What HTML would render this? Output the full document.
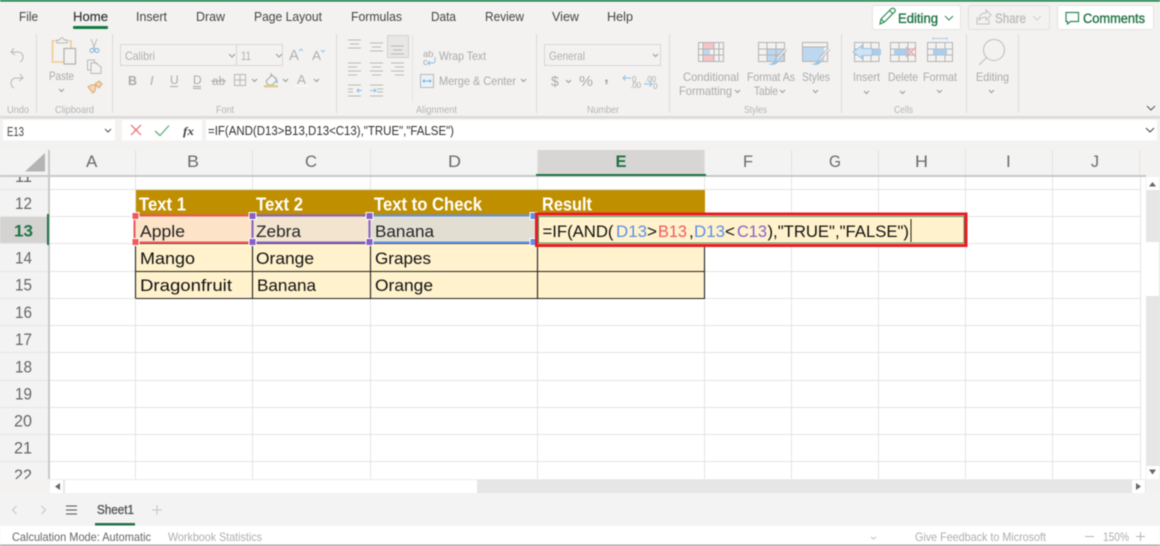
<!DOCTYPE html>
<html><head><meta charset="utf-8"><style>
html,body{margin:0;padding:0;background:#f3f2f1;overflow:hidden}
svg{display:block;filter:blur(.4px)}
text{font-family:"Liberation Sans",sans-serif;white-space:pre}
.tab{font-size:13px;fill:#444}
.g{font-size:10.5px;fill:#b4b4b4}
.r{font-size:12px;fill:#aaa}
.rn{font-size:17px;fill:#666}
.ch{font-size:17px;fill:#6a6a6a}
.c{font-size:17px;fill:#111}
.h{font-size:18px;font-weight:bold;fill:#fff}
.ic{fill:none;stroke:#b8b8b8;stroke-width:1}
.chev{fill:none;stroke:#999;stroke-width:1}
.btn{font-size:13.5px;stroke-width:.35}
</style></head><body>
<svg width="1160" height="546" viewBox="0 0 1160 546" xmlns="http://www.w3.org/2000/svg">
<rect width="1160" height="546" fill="#f3f2f1"/>
<rect width="1160" height="1.6" fill="#107c41"/>
<!-- tabs -->
<text class="tab" x="19" y="21" textLength="19" lengthAdjust="spacingAndGlyphs">File</text>
<text class="tab" x="73" y="21" textLength="35" lengthAdjust="spacingAndGlyphs" style="fill:#333;stroke:#333;stroke-width:.2">Home</text>
<text class="tab" x="136" y="21" textLength="31" lengthAdjust="spacingAndGlyphs">Insert</text>
<text class="tab" x="196" y="21" textLength="29" lengthAdjust="spacingAndGlyphs">Draw</text>
<text class="tab" x="254" y="21" textLength="68" lengthAdjust="spacingAndGlyphs">Page Layout</text>
<text class="tab" x="351" y="21" textLength="51" lengthAdjust="spacingAndGlyphs">Formulas</text>
<text class="tab" x="431" y="21" textLength="25" lengthAdjust="spacingAndGlyphs">Data</text>
<text class="tab" x="485" y="21" textLength="39" lengthAdjust="spacingAndGlyphs">Review</text>
<text class="tab" x="552" y="21" textLength="27" lengthAdjust="spacingAndGlyphs">View</text>
<text class="tab" x="607" y="21" textLength="26" lengthAdjust="spacingAndGlyphs">Help</text>
<rect x="73" y="26" width="35" height="3" rx="1" fill="#107c41"/>
<!-- top right buttons -->
<rect x="872.500" y="5.500" width="88" height="24" rx="2" fill="#fff" stroke="#e6e4e2"/>
<path d="M880 24l1-5 10-10c1-1 2.500-1 3.500 0s1 2 0 3l-10 10zM881 19l3.500 3.500M889.500 10.500l3.500 3.500" fill="none" stroke="#2e8b57" stroke-width="1.200"/>
<text class="btn" x="898" y="23" textLength="40" lengthAdjust="spacingAndGlyphs" style="fill:#217346;stroke:#217346">Editing</text>
<path d="M945 16l4 4 4-4" fill="none" stroke="#2e8b57" stroke-width="1"/>
<rect x="968.500" y="5.500" width="81" height="24" rx="2" fill="#f3f2f1" stroke="#e3e1df"/>
<path d="M977 17v7h12v-5M979 20c0-5 3-7 7-7v-3l5 5-5 5v-3c-3 0-5 1-7 3z" fill="none" stroke="#c2c2c2"/>
<text class="btn" x="995" y="23" textLength="31" lengthAdjust="spacingAndGlyphs" style="fill:#bdbdbd;stroke:#bdbdbd">Share</text>
<path d="M1033 16l4 4 4-4" fill="none" stroke="#d0d0d0"/>
<rect x="1057.500" y="5.500" width="96" height="24" rx="2" fill="#fff" stroke="#e6e4e2"/>
<path d="M1066 12.500h12.500v9h-8l-3 2.500v-2.500h-1.500z" fill="none" stroke="#2e8b57" stroke-width="1.200"/>
<text class="btn" x="1083" y="23" textLength="62" lengthAdjust="spacingAndGlyphs" style="fill:#217346;stroke:#217346">Comments</text>
<!-- ribbon separators -->
<path d="M36.500 34v79M112.500 34v79M336.500 34v79M536.500 34v79M669.500 34v79M841.500 34v79M966.500 34v79M1018.500 34v79" stroke="#dcdbd9"/>
<path d="M412.500 35v66" stroke="#e4e3e1"/>
<!-- undo redo -->
<path d="M14 48l-3 4 4 3M11 52h7c3 0 5 2 5 5 0 2-1 4-3 5" class="ic"/>
<path d="M20 74l3 4-4 3M23 78h-7c-3 0-5 2-5 5 0 2 1 4 3 5" class="ic"/>
<text class="g" x="7" y="113" textLength="22" lengthAdjust="spacingAndGlyphs">Undo</text>
<!-- clipboard -->
<path d="M57 41h-4.500v21h11.500M68 41h3v7" fill="none" stroke="#f2cf9f" stroke-width="1.800"/>
<path d="M57 43v-3h3c0-3 4-3 4 0h3v3z" fill="#f3f2f1" stroke="#b8b8b8"/>
<rect x="64" y="48.500" width="11.500" height="15.500" fill="#f3f2f1" stroke="#b0b0b0" stroke-width="1.200"/>
<text class="r" x="49" y="80" textLength="25" lengthAdjust="spacingAndGlyphs">Paste</text>
<path class="chev" d="M59 89l2.500 2.500 2.500-2.500"/>
<path d="M91 39l4 10M97 39l-4 10" class="ic"/>
<circle cx="92" cy="50.500" r="2" fill="none" stroke="#7fb3dd"/><circle cx="97" cy="50.500" r="2" fill="none" stroke="#7fb3dd"/>
<path d="M87.500 60h7l-.001 3h3M91 63l4-.5 6 4.500v6.500h-10zM87.500 60v10h3" class="ic"/>
<path d="M95 84l4-3 3 3-3 4zM96 85l-5 0-3 2 5 6 2-2z" fill="#f6d6ae" stroke="#d8a878"/>
<text class="g" x="55" y="113" textLength="39" lengthAdjust="spacingAndGlyphs">Clipboard</text>
<!-- font -->
<rect x="120.500" y="44.500" width="162" height="21" fill="#f3f2f1" stroke="#d8d7d5"/>
<path d="M236.500 45v20" stroke="#d8d7d5"/>
<text class="r" x="125" y="60" textLength="30" lengthAdjust="spacingAndGlyphs" style="fill:#b0b0b0">Calibri</text>
<path class="chev" d="M229 54l3 3 3-3M276 54l3 3 3-3"/>
<text class="r" x="241" y="60" textLength="10" lengthAdjust="spacingAndGlyphs" style="fill:#b0b0b0">11</text>
<text x="289" y="60" font-size="15" textLength="10" lengthAdjust="spacingAndGlyphs" style="fill:#b0b0b0">A</text>
<text x="312" y="60" font-size="13" textLength="9" lengthAdjust="spacingAndGlyphs" style="fill:#b0b0b0">A</text>
<path d="M299 51l2-2 2 2" fill="none" stroke="#9cc4e4"/><path d="M321 50l2 2 2-2" fill="none" stroke="#9cc4e4"/>
<text x="128" y="85" font-size="12.500" font-weight="bold" style="fill:#aaa">B</text>
<text x="150" y="85" font-size="12.500" font-style="italic" style="fill:#aaa">I</text>
<text x="170" y="84" font-size="12" style="fill:#aaa">U</text><path d="M170 86.500h8" stroke="#aaa"/>
<text x="193" y="84" font-size="12" style="fill:#aaa">D</text><path d="M193 86.500h8M193 88.500h8" stroke="#aaa"/>
<text x="212" y="85" font-size="11.500" textLength="13" style="fill:#aaa">ab</text><path d="M211 81h15" stroke="#aaa"/>
<path d="M234.500 74.500h11v11h-11zM240 74.500v11M234.500 80h11" class="ic" stroke-width="1.200"/>
<path class="chev" d="M252 79l2.500 2.500 2.500-2.500M283 79l2.500 2.500 2.500-2.500M314 79l2.500 2.500 2.500-2.500"/>
<path d="M266 81l6-6 5 5-5 5h-4zM271 73v4" fill="none" stroke="#aaa"/>
<path d="M275 76l2 3 1 4h-2z" fill="#8fc0e6"/>
<rect x="264" y="85" width="14" height="2.500" fill="#e0cf88"/>
<text x="297" y="84" font-size="13" textLength="9" lengthAdjust="spacingAndGlyphs" style="fill:#b0b0b0">A</text>
<rect x="295" y="85" width="13" height="2" fill="#f8f8f8"/>
<text class="g" x="216" y="113" textLength="18" lengthAdjust="spacingAndGlyphs">Font</text>
<!-- alignment -->
<rect x="387.500" y="35.500" width="21" height="22" fill="#e8e7e5" stroke="#d3d2d0"/>
<path d="M348 40h13M350 44h9M348 48h13 M370 43h13M372 47h9M370 51h13 M391 46h13M393 50h9M391 54h13" class="ic"/>
<path d="M348 63h13M348 67h9M348 71h13M348 75h9 M370 63h13M372 67h9M370 71h13M372 75h9 M391 63h13M395 67h9M391 71h13M395 75h9" class="ic"/>
<path d="M348 85h13M348 96h13M348 89h5M348 92h5 M370 85h13M370 96h13M377 89h6M377 92h6" class="ic"/>
<path d="M362 90.500h-5M359 88.500l-2 2 2 2" fill="none" stroke="#8fc0e6"/>
<path d="M370 90.500h6M374 88.500l2 2-2 2" fill="none" stroke="#8fc0e6"/>
<text x="423" y="57" font-size="9.500" style="fill:#aaa">ab</text><text x="423" y="65" font-size="9.500" style="fill:#aaa">c</text>
<path d="M435 57v4c0 1-1 2-2 2h-5M430 61l-2 2 2 2" fill="none" stroke="#8fc0e6"/>
<text class="r" x="439" y="60" textLength="47" lengthAdjust="spacingAndGlyphs">Wrap Text</text>
<rect x="420.500" y="74.500" width="13" height="13" fill="#eaf2f9" stroke="#b8b8b8"/>
<path d="M423 81h8M424.500 79.500l-1.500 1.500 1.500 1.500M429.500 79.500l1.500 1.500-1.500 1.500" fill="none" stroke="#7fb3dd"/>
<text class="r" x="439" y="85" textLength="77" lengthAdjust="spacingAndGlyphs">Merge &amp; Center</text>
<path class="chev" d="M521 79l2.500 2.500 2.500-2.500"/>
<text class="g" x="416" y="113" textLength="41" lengthAdjust="spacingAndGlyphs">Alignment</text>
<!-- number -->
<rect x="544.500" y="44.500" width="116" height="21" fill="#f3f2f1" stroke="#d8d7d5"/>
<text class="r" x="549" y="60" textLength="36" lengthAdjust="spacingAndGlyphs" style="fill:#b0b0b0">General</text>
<path class="chev" d="M653 54l2.500 2.500 2.500-2.500M566 80l2.500 2.500 2.500-2.500"/>
<text x="551" y="86" font-size="14" style="fill:#aaa">$</text>
<text x="579" y="86" font-size="15" textLength="14" lengthAdjust="spacingAndGlyphs" style="fill:#aaa">%</text>
<text x="604" y="82" font-size="17" font-weight="bold" style="fill:#aaa">,</text>
<path d="M631 78h-8M625.500 75.500l-2.500 2.500 2.500 2.500" fill="none" stroke="#8fc0e6"/>
<text x="632" y="82" font-size="8" style="fill:#aaa">0</text><text x="630" y="88" font-size="8" style="fill:#aaa">.00</text>
<text x="645" y="82" font-size="8" style="fill:#aaa">.00</text>
<path d="M644 84h8M649.500 81.500l2.500 2.500-2.500 2.500" fill="none" stroke="#8fc0e6"/>
<text x="653" y="89" font-size="8" style="fill:#aaa">0</text>
<text class="g" x="587" y="113" textLength="32" lengthAdjust="spacingAndGlyphs">Number</text>
<!-- styles -->
<rect x="698.500" y="42.500" width="25" height="19" fill="#f3f2f1"/>
<rect x="703" y="43" width="11" height="6" fill="#f6c3c8"/><rect x="703" y="49" width="7" height="6" fill="#bcd7ef"/><rect x="703" y="55" width="11" height="6" fill="#f6c3c8"/>
<path d="M698.500 42.500h25v19h-25zM703 43v18M714 43v18M719 43v18M699 49h24M699 55h24" fill="none" stroke="#b4b4b4"/>
<text class="r" x="683" y="81" textLength="56" lengthAdjust="spacingAndGlyphs">Conditional</text>
<text class="r" x="679" y="95" textLength="53" lengthAdjust="spacingAndGlyphs">Formatting</text>
<path class="chev" d="M735 90l2.500 2.500 2.500-2.500M780 90l2.500 2.500 2.500-2.500M813 90l2.500 2.500 2.500-2.500"/>
<rect x="767" y="49" width="18" height="13" fill="#bcd7ef"/>
<path d="M758.500 42.500h26v19h-26zM767 43v18M776 43v18M759 49h25M759 55h25" fill="none" stroke="#b4b4b4"/>
<path d="M786 49l-9 10" stroke="#b0b0b0" stroke-width="3"/><path d="M786 49l-9 10" stroke="#f3f2f1" stroke-width="1.400"/>
<path d="M775 59c-1 4-4 5-7 5 2 1 8 2 10-2z" fill="#9cc4e4"/>
<text class="r" x="747" y="81" textLength="48" lengthAdjust="spacingAndGlyphs">Format As</text>
<text class="r" x="754" y="95" textLength="24" lengthAdjust="spacingAndGlyphs">Table</text>
<rect x="803" y="47" width="21" height="14" fill="#bcd7ef"/>
<path d="M802.500 42.500h25v19h-25zM802 47h25" fill="none" stroke="#b4b4b4"/>
<path d="M829 49l-9 10" stroke="#b0b0b0" stroke-width="3"/><path d="M829 49l-9 10" stroke="#f3f2f1" stroke-width="1.400"/>
<path d="M818 59c-1 4-4 5-7 5 2 1 8 2 10-2z" fill="#9cc4e4"/>
<text class="r" x="802" y="81" textLength="28" lengthAdjust="spacingAndGlyphs">Styles</text>
<text class="g" x="744" y="113" textLength="23" lengthAdjust="spacingAndGlyphs">Styles</text>
<!-- cells -->
<path d="M854.500 42.500h24.500v19h-24.500zM863 43v18M871 43v18M855 49h24M855 55h24" fill="none" stroke="#b4b4b4"/>
<rect x="861" y="49" width="20" height="6" fill="#a9cdea"/>
<path d="M862 45.500l-9 6.500 9 6.500v-3h10v-7h-10z" fill="#cfe3f4" stroke="#9cc4e4"/>
<text class="r" x="853" y="81" textLength="27" lengthAdjust="spacingAndGlyphs">Insert</text>
<path d="M890.500 42.500h25v19h-25zM899 43v18M908 43v18M891 49h24M891 55h24" fill="none" stroke="#b4b4b4"/>
<rect x="894" y="49" width="14" height="6" fill="#a9cdea"/>
<path d="M906 47l10 10M916 47l-10 10" stroke="#f0a6a6" stroke-width="1.300"/>
<text class="r" x="888" y="81" textLength="30" lengthAdjust="spacingAndGlyphs">Delete</text>
<path d="M927.500 42.500h25v19h-25zM936 43v18M945 43v18M928 49h24M928 55h24" fill="none" stroke="#b4b4b4"/>
<rect x="933" y="49" width="14" height="6" fill="#a9cdea"/>
<path d="M933 38.500h14M933 37v3M947 37v3" stroke="#a9cdea"/>
<text class="r" x="923" y="81" textLength="34" lengthAdjust="spacingAndGlyphs">Format</text>
<path class="chev" d="M864 91l2.500 2.500 2.500-2.500M900 91l2.500 2.500 2.500-2.500M937 90l2.500 2.500 2.500-2.500M989 90l2.500 2.500 2.500-2.500"/>
<text class="g" x="894" y="113" textLength="19" lengthAdjust="spacingAndGlyphs">Cells</text>
<circle cx="994" cy="50" r="10.500" fill="none" stroke="#bcbcbc" stroke-width="1"/>
<path d="M986.500 57.500l-7.500 7.500" stroke="#bcbcbc"/>
<text class="r" x="976" y="81" textLength="33" lengthAdjust="spacingAndGlyphs">Editing</text>
<path d="M1147 106l4 4 4-4" fill="none" stroke="#555"/>
<!-- formula bar -->
<rect y="116" width="1160" height="2.500" fill="#dcdbd9"/>
<rect x="3" y="120" width="112" height="20.500" fill="#fff"/>
<rect x="122" y="120" width="80" height="20.500" fill="#fff"/>
<rect x="206" y="120" width="951" height="20.500" fill="#fff"/>
<text x="7" y="136" font-size="12.500" textLength="17" lengthAdjust="spacingAndGlyphs" style="fill:#444">E13</text>
<path d="M105 129l3 3 3-3" fill="none" stroke="#555"/>
<path d="M131 125l10 10M141 125l-10 10" stroke="#e8696b" stroke-width="1.200"/>
<path d="M155 131l5 4.500 9-10" fill="none" stroke="#58b078" stroke-width="1.200"/>
<text x="183" y="135" font-size="12" font-style="italic" font-weight="bold" textLength="11" lengthAdjust="spacingAndGlyphs" style="font-family:'Liberation Serif',serif;fill:#444">fx</text>
<text x="208" y="135" font-size="13" textLength="246" lengthAdjust="spacingAndGlyphs" style="fill:#333">=IF(AND(D13&gt;B13,D13&lt;C13),"TRUE","FALSE")</text>
<path d="M1146 128l4 4 4-4" fill="none" stroke="#444"/>
<!-- header bg -->
<rect y="150" width="1160" height="27" fill="#f3f3f3"/>
<rect y="177" width="48" height="302" fill="#f3f3f3"/>
<rect x="1140" y="150" width="20" height="27" fill="#f3f2f1"/>
<rect x="50" y="177" width="1096" height="302" fill="#fff"/>
<rect x="538" y="150" width="167" height="25" fill="#d8d6d4"/>
<rect x="0" y="216" width="47" height="28" fill="#d4d3d1"/>
<!-- grid lines -->
<path d="M50 189.500H1141M50 216.500H1141M50 243.500H1141M50 271.500H1141M50 298.500H1141M50 325.500H1141M50 352.500H1141M50 380.500H1141M50 407.500H1141M50 434.500H1141M50 461.500H1141" stroke="#e3e3e3"/>
<path d="M135.500 177V479M252.500 177V479M370.500 177V479M537.500 177V479M704.500 177V479M791.500 177V479M878.500 177V479M965.500 177V479M1052.500 177V479M1140.500 177V479" stroke="#e3e3e3"/>
<path d="M0 189.500H48M0 216.500H48M0 243.500H48M0 271.500H48M0 298.500H48M0 325.500H48M0 352.500H48M0 380.500H48M0 407.500H48M0 434.500H48M0 461.500H48" stroke="#e6e6e6"/>
<path d="M48.500 150V177M135.500 150V175M252.500 150V175M370.500 150V175M537.500 150V175M704.500 150V175M791.500 150V175M878.500 150V175M965.500 150V175M1052.500 150V175M1139.500 150V175" stroke="#e2e2e2"/>
<rect y="175" width="1146" height="2" fill="#c8c8c8"/>
<rect x="48" y="150" width="2" height="329" fill="#c8c8c8"/>
<rect x="536" y="174" width="170" height="2" fill="#217346"/>
<rect x="47" y="214" width="2" height="31" fill="#217346"/>
<polygon points="25,171.500 45,171.500 45,153" fill="#b4b4b4"/>
<!-- col letters -->
<text class="ch" x="86" y="167">A</text>
<text class="ch" x="187" y="167" textLength="12" lengthAdjust="spacingAndGlyphs">B</text>
<text class="ch" x="305" y="167" textLength="12" lengthAdjust="spacingAndGlyphs">C</text>
<text class="ch" x="448" y="167" textLength="13" lengthAdjust="spacingAndGlyphs">D</text>
<text class="ch" x="615.500" y="167" textLength="11" lengthAdjust="spacingAndGlyphs" font-weight="bold" style="fill:#217346">E</text>
<text class="ch" x="743" y="167" textLength="10" lengthAdjust="spacingAndGlyphs">F</text>
<text class="ch" x="829" y="167" textLength="12" lengthAdjust="spacingAndGlyphs">G</text>
<text class="ch" x="915" y="167" textLength="13" lengthAdjust="spacingAndGlyphs">H</text>
<text class="ch" x="1006" y="167">I</text>
<text class="ch" x="1091" y="167" textLength="8" lengthAdjust="spacingAndGlyphs">J</text>
<!-- row numbers -->
<svg x="0" y="177" width="48" height="302" viewBox="0 177 48 302" style="filter:none">
<text class="rn" x="15" y="182" textLength="17" lengthAdjust="spacingAndGlyphs">11</text>
<text class="rn" x="15" y="209" textLength="17" lengthAdjust="spacingAndGlyphs">12</text>
<text class="rn" x="14" y="236.500" textLength="19" lengthAdjust="spacingAndGlyphs" font-weight="bold" style="fill:#217346">13</text>
<text class="rn" x="15" y="263.500" textLength="17" lengthAdjust="spacingAndGlyphs">14</text>
<text class="rn" x="15" y="290.500" textLength="17" lengthAdjust="spacingAndGlyphs">15</text>
<text class="rn" x="15" y="318" textLength="17" lengthAdjust="spacingAndGlyphs">16</text>
<text class="rn" x="15" y="345" textLength="17" lengthAdjust="spacingAndGlyphs">17</text>
<text class="rn" x="15" y="372.500" textLength="17" lengthAdjust="spacingAndGlyphs">18</text>
<text class="rn" x="15" y="399.500" textLength="17" lengthAdjust="spacingAndGlyphs">19</text>
<text class="rn" x="14" y="426.500" textLength="18" lengthAdjust="spacingAndGlyphs">20</text>
<text class="rn" x="14" y="453.500" textLength="18" lengthAdjust="spacingAndGlyphs">21</text>
<text class="rn" x="14" y="481" textLength="18" lengthAdjust="spacingAndGlyphs">22</text>
</svg>
<!-- table -->
<rect x="136" y="190" width="569" height="26" fill="#bf8f00"/>
<rect x="136" y="216" width="569" height="82" fill="#fff2cc"/>
<rect x="136" y="216" width="116" height="27" fill="#fde3c7"/>
<rect x="253" y="216" width="117" height="27" fill="#f3e4cf"/>
<rect x="371" y="216" width="166" height="27" fill="#e2dfd2"/>
<path d="M135.500 244V298.500M252.500 244V298.500M370.500 244V298.500M537.500 244V298.500M704.500 216V298.500M136 271.500H705M136 298.500H705M136 243.500H705" stroke="#222" stroke-width="1.100"/>
<path d="M371 215.500H534M371 242.500H534" stroke="#5f8fe6" stroke-width="2"/>
<path d="M253 215.500H369M253 242.500H369M252.500 216V242M369.500 216V242" stroke="#8661c5" stroke-width="2"/>
<path d="M136 215.500H252M136 242.500H252M134.500 216V242" stroke="#e9575c" stroke-width="2"/>
<g stroke="#fff" stroke-width="1">
<rect x="132" y="212.500" width="7" height="7" fill="#ee5a60"/><rect x="132" y="238.500" width="7" height="7" fill="#ee5a60"/>
<rect x="249" y="212.500" width="7" height="7" fill="#8661c5"/><rect x="249" y="238.500" width="7" height="7" fill="#8661c5"/>
<rect x="366" y="212.500" width="7" height="7" fill="#8661c5"/><rect x="366" y="238.500" width="7" height="7" fill="#8661c5"/>
<rect x="530" y="212.500" width="7" height="7" fill="#5f8fe6"/><rect x="530" y="238.500" width="7" height="7" fill="#5f8fe6"/>
</g>
<text class="h" x="139" y="210.500" textLength="47" lengthAdjust="spacingAndGlyphs">Text 1</text>
<text class="h" x="256" y="210.500" textLength="47" lengthAdjust="spacingAndGlyphs">Text 2</text>
<text class="h" x="374" y="210.500" textLength="108" lengthAdjust="spacingAndGlyphs">Text to Check</text>
<text class="h" x="542" y="210.500" textLength="50" lengthAdjust="spacingAndGlyphs">Result</text>
<text class="c" x="140" y="237" textLength="45" lengthAdjust="spacingAndGlyphs" style="fill:#222">Apple</text>
<text class="c" x="256" y="237" textLength="45" lengthAdjust="spacingAndGlyphs" style="fill:#222">Zebra</text>
<text class="c" x="375" y="237" textLength="59" lengthAdjust="spacingAndGlyphs" style="fill:#222">Banana</text>
<text class="c" x="140" y="264" textLength="55" lengthAdjust="spacingAndGlyphs">Mango</text>
<text class="c" x="256" y="264" textLength="58" lengthAdjust="spacingAndGlyphs">Orange</text>
<text class="c" x="375" y="264" textLength="56" lengthAdjust="spacingAndGlyphs">Grapes</text>
<text class="c" x="140" y="291" textLength="92" lengthAdjust="spacingAndGlyphs">Dragonfruit</text>
<text class="c" x="257" y="291" textLength="59" lengthAdjust="spacingAndGlyphs">Banana</text>
<text class="c" x="375" y="291" textLength="58" lengthAdjust="spacingAndGlyphs">Orange</text>
<!-- editing cell -->
<rect x="536.500" y="214" width="429.500" height="31.500" fill="#fff2cc" stroke="#e81c24" stroke-width="3"/>
<rect x="538.500" y="216.500" width="425.500" height="26.500" fill="none" stroke="#5f8f5f" stroke-width="1"/>
<text class="c" x="542.500" y="237" textLength="71" lengthAdjust="spacingAndGlyphs">=IF(AND(</text>
<text class="c" x="616" y="237" textLength="31" lengthAdjust="spacingAndGlyphs" style="fill:#5f8fe6">D13</text>
<text class="c" x="647" y="237" textLength="10" lengthAdjust="spacingAndGlyphs">&gt;</text>
<text class="c" x="658" y="237" textLength="29" lengthAdjust="spacingAndGlyphs" style="fill:#ee5a60">B13</text>
<text class="c" x="689" y="237">,</text>
<text class="c" x="694" y="237" textLength="31" lengthAdjust="spacingAndGlyphs" style="fill:#5f8fe6">D13</text>
<text class="c" x="725" y="237" textLength="10" lengthAdjust="spacingAndGlyphs">&lt;</text>
<text class="c" x="737" y="237" textLength="30" lengthAdjust="spacingAndGlyphs" style="fill:#8661c5">C13</text>
<text class="c" x="767.500" y="237" textLength="141.500" lengthAdjust="spacingAndGlyphs">),"TRUE","FALSE")</text>
<path d="M911 219v23" stroke="#222" stroke-width="1"/>
<!-- vertical scrollbar -->
<rect x="1146" y="177" width="14" height="302" fill="#e6e6e6"/>
<rect x="1146.500" y="177" width="13" height="13" fill="#fff"/>
<polygon points="1149,186.500 1156,186.500 1152.500,182" fill="#666"/>
<rect x="1146" y="242" width="13" height="54" fill="#fff"/>
<rect x="1146.500" y="466" width="13" height="13" fill="#fff"/>
<polygon points="1149,469.500 1156,469.500 1152.500,474.500" fill="#666"/>
<!-- horizontal scrollbar -->
<rect x="50" y="479.500" width="1096" height="13.500" fill="#e6e6e6"/>
<rect x="50" y="480" width="13" height="13" fill="#fff"/>
<polygon points="55,486.500 60,483 60,490" fill="#666"/>
<rect x="65" y="480" width="412" height="13" fill="#fff"/>
<rect x="1132" y="480" width="13" height="13" fill="#fff"/>
<polygon points="1141,486.500 1136,483 1136,490" fill="#666"/>
<!-- sheet tabs -->
<rect y="493" width="1160" height="33" fill="#f3f3f3"/>
<path d="M16.500 506l-4 4 4 4M41.500 506l4 4-4 4" fill="none" stroke="#c4c4c4"/>
<path d="M66 506h11M66 510h11M66 514h11" stroke="#555" stroke-width="1.100"/>
<text x="97" y="514" font-size="13" textLength="37" lengthAdjust="spacingAndGlyphs" style="fill:#555;stroke:#555;stroke-width:.35">Sheet1</text>
<rect x="95" y="523" width="40" height="2.500" fill="#217346"/>
<path d="M152 510h10M157 505v10" stroke="#c4c4c4"/>
<!-- status bar -->
<rect y="526" width="1160" height="18.500" fill="#fff"/>
<rect y="544.500" width="1160" height="1.500" fill="#a8a8a8"/>
<text x="12" y="541" font-size="12" textLength="139" lengthAdjust="spacingAndGlyphs" style="fill:#666">Calculation Mode: Automatic</text>
<text x="168" y="541" font-size="12" textLength="94" lengthAdjust="spacingAndGlyphs" style="fill:#aeaeae">Workbook Statistics</text>
<path d="M871 537l2.500 2 2.500-2" fill="none" stroke="#bbb"/>
<text x="915" y="541" font-size="12" textLength="131" lengthAdjust="spacingAndGlyphs" style="fill:#aeaeae">Give Feedback to Microsoft</text>
<path d="M1085 536.500h9M1136 536.500h9M1140.500 532v9" stroke="#b4b4b4"/>
<text x="1103" y="541" font-size="12" textLength="26" lengthAdjust="spacingAndGlyphs" style="fill:#aeaeae">150%</text>
</svg>
</body></html>
